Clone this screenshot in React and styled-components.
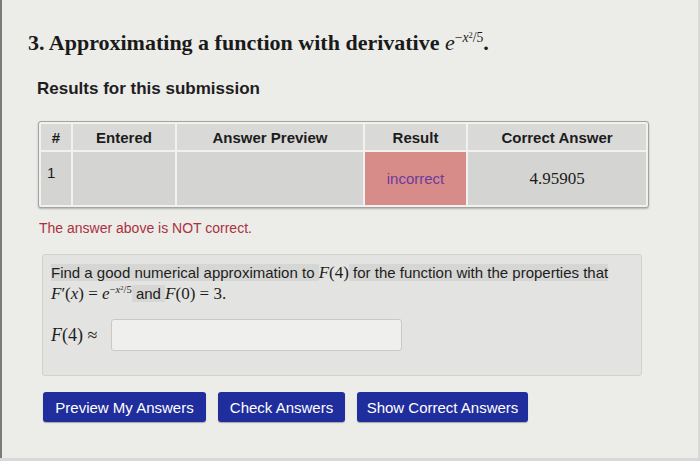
import React from "react";
import styled, { createGlobalStyle } from "styled-components";

const Global = createGlobalStyle`
  html, body { margin: 0; padding: 0; background: #d9d9d7; }
  body { font-family: "Liberation Sans", Arial, sans-serif; color: #1d1d1d; }
`;

const Page = styled.div`
  width: 698px;
  height: 458px;
  box-sizing: border-box;
  border-left: 2px solid #7b7b7b;
  background: #ecece9;
  padding: 30px 0 0 26px;
  overflow: hidden;
`;

const Title = styled.h1`
  margin: 0;
  font-family: "Liberation Serif", "Times New Roman", serif;
  font-weight: bold;
  font-size: 22px;
  color: #1a1a1a;
`;

const Math = styled.span`
  font-family: "Liberation Serif", "Times New Roman", serif;
  font-weight: normal;
  font-size: ${(p) => p.size || "inherit"};
`;

const I = styled.i`
  font-style: italic;
`;

const Sup = styled.sup`
  font-size: 62%;
  vertical-align: ${(p) => p.raise || "0.6em"};
  line-height: 0;
`;

const Results = styled.h2`
  margin: 23px 0 0 9px;
  font-size: 17px;
  font-weight: bold;
  color: #1e1e1e;
`;

const Table = styled.table`
  margin: 22px 0 0 10px;
  border-collapse: separate;
  border-spacing: 2px;
  background: #f1f1ef;
  border: 1px solid #a3a3a3;
  border-radius: 3px;
  box-shadow: 0 1px 2px rgba(0, 0, 0, 0.25);
`;

const Th = styled.th`
  box-sizing: border-box;
  width: ${(p) => p.w}px;
  height: 26px;
  padding: 0;
  background: #d9d9d7;
  font-size: 15px;
  font-weight: bold;
  color: #1c1c1c;
  text-align: center;
`;

const Td = styled.td`
  box-sizing: border-box;
  height: 53px;
  padding: ${(p) => (p.valign === "top" ? "12px 0 0 6px" : "0")};
  background: ${(p) => (p.bad ? "#d88c8a" : "#d4d4d2")};
  color: ${(p) => (p.bad ? "#6b3a9a" : "#1c1c1c")};
  font-size: ${(p) => (p.serif ? "17px" : "15px")};
  font-family: ${(p) =>
    p.serif ? '"Liberation Serif", "Times New Roman", serif' : "inherit"};
  text-align: ${(p) => p.align || "center"};
  vertical-align: ${(p) => p.valign || "middle"};
`;

const Message = styled.p`
  margin: 12px 0 0 11px;
  font-size: 14px;
  color: #a9323f;
`;

const Problem = styled.div`
  width: 600px;
  height: 122px;
  box-sizing: border-box;
  margin: 18px 0 0 14px;
  padding: 7px 8px;
  background: #e3e3e1;
  border: 1px solid #d1d1cf;
  border-radius: 3px;
  font-size: 15px;
  line-height: 21px;
`;

const Hi = styled.span`
  background: #d6d6d4;
`;

const AnswerRow = styled.div`
  display: flex;
  align-items: center;
  gap: 14px;
  margin-top: 15px;
`;

const Input = styled.div`
  width: 291px;
  height: 32px;
  box-sizing: border-box;
  background: #efefed;
  border: 1px solid #c9c9c7;
  border-radius: 3px;
`;

const Buttons = styled.div`
  display: flex;
  gap: 12px;
  margin: 16px 0 0 15px;
`;

const Button = styled.button`
  height: 30px;
  width: ${(p) => p.w}px;
  padding: 0;
  border: none;
  border-radius: 3px;
  background: #1f2e9c;
  box-shadow: 0 1px 1px rgba(0, 0, 0, 0.3);
  color: #fff;
  font-family: "Liberation Sans", Arial, sans-serif;
  font-size: 15px;
`;

function Exp() {
  return (
    <>
      <I>e</I>
      <Sup>
        −<I>x</I>
        <Sup raise="0.5em">2</Sup>/5
      </Sup>
    </>
  );
}

export default function App() {
  return (
    <Page>
      <Global />
      <Title>
        3. Approximating a function with derivative{" "}
        <Math>
          <Exp />
        </Math>
        .
      </Title>

      <Results>Results for this submission</Results>

      <Table>
        <thead>
          <tr>
            <Th w={30}>#</Th>
            <Th w={102}>Entered</Th>
            <Th w={186}>Answer Preview</Th>
            <Th w={101}>Result</Th>
            <Th w={178}>Correct Answer</Th>
          </tr>
        </thead>
        <tbody>
          <tr>
            <Td align="left" valign="top">1</Td>
            <Td />
            <Td />
            <Td bad>incorrect</Td>
            <Td serif>4.95905</Td>
          </tr>
        </tbody>
      </Table>

      <Message>The answer above is NOT correct.</Message>

      <Problem>
        <Hi>Find a good numerical approximation to </Hi>
        <Math size="17px">
          <I>F</I>(4)
        </Math>
        <Hi> for the function with the properties that</Hi>
        <br />
        <Math size="17px">
          <I>F</I>′(<I>x</I>) = <Exp />
        </Math>
        <Hi> and </Hi>
        <Math size="17px">
          <I>F</I>(0) = 3.
        </Math>
        <AnswerRow>
          <Math size="18px">
            <I>F</I>(4) ≈
          </Math>
          <Input />
        </AnswerRow>
      </Problem>

      <Buttons>
        <Button w={163}>Preview My Answers</Button>
        <Button w={127}>Check Answers</Button>
        <Button w={171}>Show Correct Answers</Button>
      </Buttons>
    </Page>
  );
}
